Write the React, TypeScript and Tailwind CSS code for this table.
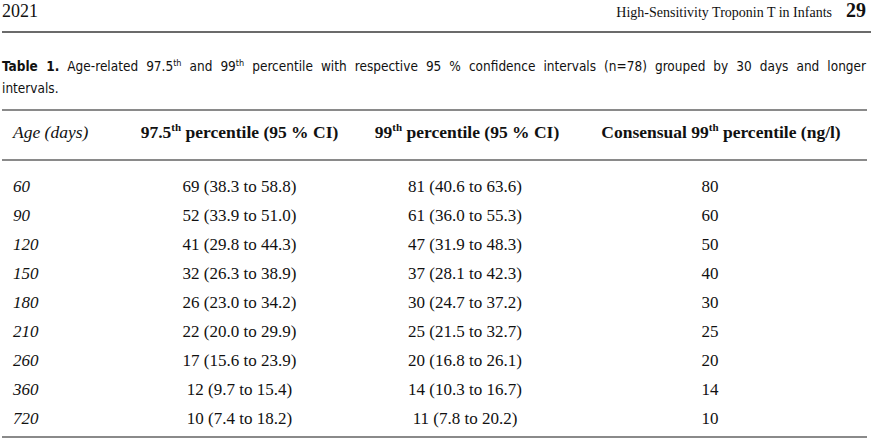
const rows = [
  ['60', '69 (38.3 to 58.8)', '81 (40.6 to 63.6)', '80'],
  ['90', '52 (33.9 to 51.0)', '61 (36.0 to 55.3)', '60'],
  ['120', '41 (29.8 to 44.3)', '47 (31.9 to 48.3)', '50'],
  ['150', '32 (26.3 to 38.9)', '37 (28.1 to 42.3)', '40'],
  ['180', '26 (23.0 to 34.2)', '30 (24.7 to 37.2)', '30'],
  ['210', '22 (20.0 to 29.9)', '25 (21.5 to 32.7)', '25'],
  ['260', '17 (15.6 to 23.9)', '20 (16.8 to 26.1)', '20'],
  ['360', '12 (9.7 to 15.4)', '14 (10.3 to 16.7)', '14'],
  ['720', '10 (7.4 to 18.2)', '11 (7.8 to 20.2)', '10'],
];

const serif = "font-['Liberation_Serif','Times_New_Roman',serif]";

function Th({ children }: { children: React.ReactNode }) {
  return <sup className="text-[11px] relative top-[-7px] align-baseline leading-none">{children}</sup>;
}

function CapTh({ children }: { children: React.ReactNode }) {
  return <sup className="text-[9px] relative top-[-5px] align-baseline leading-none">{children}</sup>;
}

export default function App() {
  return (
    <div className="w-[873px] h-[447px] bg-white text-[#111] overflow-hidden px-[2px]">
      {/* Running head */}
      <div className={`${serif} h-[33px] flex items-baseline justify-between border-b-2 border-[#6b6b6b] pr-[5px] pt-[1px] leading-[18px]`}>
        <span className="text-[18px]">2021</span>
        <span className="flex items-baseline gap-[14px]">
          <span className="text-[14px]">High-Sensitivity Troponin T in Infants</span>
          <span className="text-[20px] font-bold">29</span>
        </span>
      </div>

      {/* Caption */}
      <div className="font-['DejaVu_Sans_Condensed','DejaVu_Sans',sans-serif] text-[13.5px] leading-[22px] pt-[22px] pr-[5px]">
        <div className="text-justify [text-align-last:justify] whitespace-nowrap">
          <b>Table 1.</b> Age-related 97.5<CapTh>th</CapTh> and 99<CapTh>th</CapTh> percentile with respective 95 % confidence intervals (n=78) grouped by 30 days and longer
        </div>
        <div>intervals.</div>
      </div>

      {/* Table */}
      <div className={`${serif} mt-[10px] mr-[4px] border-t-2 border-b-2 border-[#8a8a8a] text-[17px]`}>
        <div className="grid grid-cols-[118px_239px_216px_1fr] pt-[10px] pb-[16px] leading-[22px] border-b-2 border-[#8a8a8a] text-[17.5px]">
          <div className="pl-[11px] italic">Age (days)</div>
          <div className="text-center font-bold">
            97.5<Th>th</Th> percentile (95 % CI)
          </div>
          <div className="text-center font-bold">
            99<Th>th</Th> percentile (95 % CI)
          </div>
          <div className="text-center font-bold">
            Consensual 99<Th>th</Th> percentile (ng/l)
          </div>
        </div>
        <div className="pt-[11px] pb-[3px]">
          {rows.map((r) => (
            <div key={r[0]} className="grid grid-cols-[118px_239px_216px_1fr] h-[29px] items-center">
              <div className="pl-[11px] italic">{r[0]}</div>
              <div className="text-center">{r[1]}</div>
              <div className="text-center pr-[4px]">{r[2]}</div>
              <div className="text-center pr-[22px]">{r[3]}</div>
            </div>
          ))}
        </div>
      </div>
    </div>
  );
}
